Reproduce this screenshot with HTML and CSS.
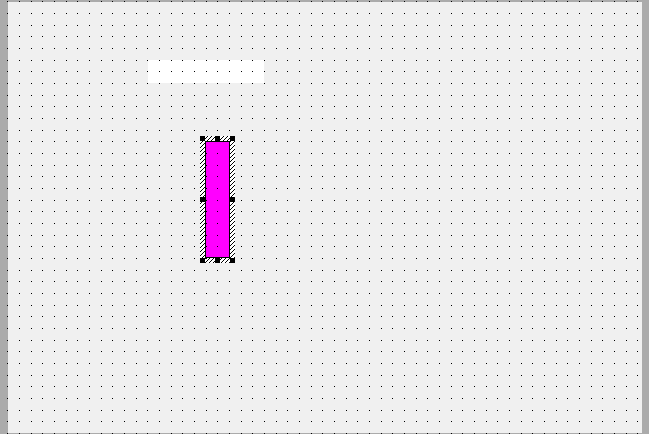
FILE: index.html
```html
<!DOCTYPE html>
<html>
<head>
<meta charset="utf-8">
<link rel="stylesheet" href="styles.css">
</head>
<body>
<div class="workspace">
  <div class="form">
    <div class="label-control"></div>
    <svg class="selection" width="35" height="127" viewBox="0 0 35 127" shape-rendering="crispEdges">
      <defs>
        <pattern id="hatch" patternUnits="userSpaceOnUse" width="4" height="4">
          <rect width="4" height="4" fill="#fff"/>
          <rect x="3" y="0" width="1" height="1" fill="#000"/>
          <rect x="2" y="1" width="1" height="1" fill="#000"/>
          <rect x="1" y="2" width="1" height="1" fill="#000"/>
          <rect x="0" y="3" width="1" height="1" fill="#000"/>
        </pattern>
      </defs>
      <rect x="0" y="0" width="35" height="127" fill="url(#hatch)"/>
      <rect x="5" y="5" width="25" height="117" fill="#000"/>
      <rect x="6" y="6" width="23" height="115" fill="#ff00ff"/>
      <rect x="0" y="0" width="5" height="5" fill="#000"/>
      <rect x="15" y="0" width="5" height="5" fill="#000"/>
      <rect x="30" y="0" width="5" height="5" fill="#000"/>
      <rect x="0" y="61" width="5" height="5" fill="#000"/>
      <rect x="30" y="61" width="5" height="5" fill="#000"/>
      <rect x="0" y="122" width="5" height="5" fill="#000"/>
      <rect x="15" y="122" width="5" height="5" fill="#000"/>
      <rect x="30" y="122" width="5" height="5" fill="#000"/>
    </svg>
  </div>
</div>
<svg class="grid" width="649" height="434" shape-rendering="crispEdges">
  <defs>
    <pattern id="dots" patternUnits="userSpaceOnUse" x="7" y="1" width="35" height="35">
      <rect x="0" y="0" width="1" height="1" fill="#000"/>
      <rect x="12" y="0" width="1" height="1" fill="#000"/>
      <rect x="24" y="0" width="1" height="1" fill="#000"/>
      <rect x="0" y="12" width="1" height="1" fill="#000"/>
      <rect x="12" y="12" width="1" height="1" fill="#000"/>
      <rect x="24" y="12" width="1" height="1" fill="#000"/>
      <rect x="0" y="24" width="1" height="1" fill="#000"/>
      <rect x="12" y="24" width="1" height="1" fill="#000"/>
      <rect x="24" y="24" width="1" height="1" fill="#000"/>
    </pattern>
  </defs>
  <rect width="649" height="434" fill="url(#dots)"/>
</svg>
</body>
</html>
```
FILE: styles.css
```css
html, body {
  margin: 0;
  padding: 0;
  width: 649px;
  height: 434px;
  overflow: hidden;
  background: #ababab;
}

.workspace {
  width: 649px;
  height: 434px;
  padding: 2px 7px 1px 8px;
  box-sizing: border-box;
}

.form {
  position: relative;
  width: 100%;
  height: 100%;
  background: #f0f0f0;
}

.label-control {
  position: absolute;
  left: 140px;
  top: 58px;
  width: 116px;
  height: 23px;
  background: #ffffff;
}

.selection {
  position: absolute;
  left: 192px;
  top: 134px;
  display: block;
}

.grid {
  position: absolute;
  left: 0;
  top: 0;
  pointer-events: none;
}
```
